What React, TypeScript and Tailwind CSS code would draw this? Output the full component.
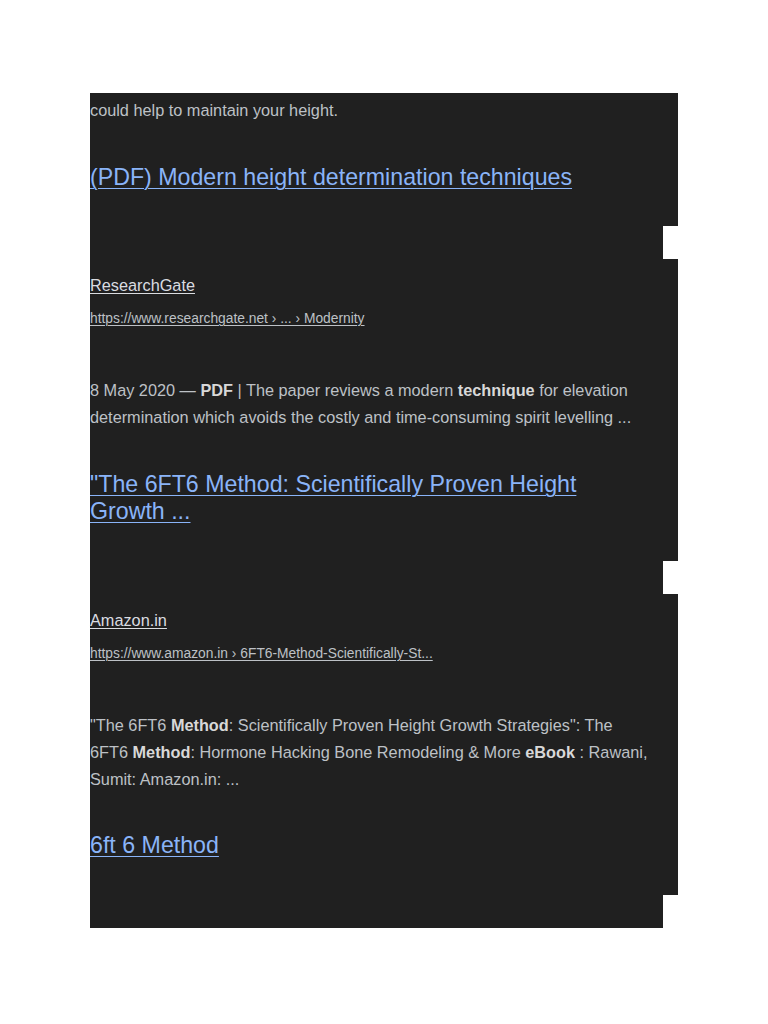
import React from "react";

const font = { fontFamily: '"Liberation Sans", Arial, sans-serif' };

function Wide({ children, className = "" }: { children: React.ReactNode; className?: string }) {
  return <div className={`w-[588px] pr-[28px] bg-[#202020] ${className}`}>{children}</div>;
}

function Strip() {
  return <div className="w-[573px] h-[33px] bg-[#202020]" />;
}

function Title({ children, className = "mt-[40px]" }: { children: React.ReactNode; className?: string }) {
  return (
    <div
      className={`${className} text-[23.2px] leading-[27px] text-[#8ab4f8] underline decoration-1 underline-offset-[3px]`}
    >
      {children}
    </div>
  );
}

function Site({ name, url }: { name: string; url: string }) {
  return (
    <>
      <div className="pt-[14px] text-[16.3px] leading-[24px] text-[#dadce0] underline decoration-1 underline-offset-2">
        {name}
      </div>
      <div className="mt-[12px] text-[13.8px] leading-[20px] text-[#bdc1c6] underline decoration-1 underline-offset-2">
        {url}
      </div>
    </>
  );
}

function Snippet({ children }: { children: React.ReactNode }) {
  return <div className="mt-[48px] text-[16.3px] leading-[27px] text-[#bdc1c6]">{children}</div>;
}

const B = ({ children }: { children: React.ReactNode }) => (
  <b className="font-bold text-[#d8d8d8]">{children}</b>
);

export default function App() {
  return (
    <div className="min-h-[1024px] bg-white pt-[93px] pl-[90px]" style={font}>
      <Wide className="pb-[35px]">
        <div className="pt-[4px] text-[16.3px] leading-[27px] text-[#bdc1c6]">could help to maintain your height.</div>
        <Title>(PDF) Modern height determination techniques</Title>
      </Wide>
      <Strip />
      <Wide className="pb-[36px]">
        <Site name="ResearchGate" url="https://www.researchgate.net › ... › Modernity" />
        <Snippet>
          8 May 2020 — <B>PDF</B> | The paper reviews a modern <B>technique</B> for elevation determination which
          avoids the costly and time-consuming spirit levelling ...
        </Snippet>
        <Title>"The 6FT6 Method: Scientifically Proven Height Growth ...</Title>
      </Wide>
      <Strip />
      <Wide className="pb-[36px]">
        <Site name="Amazon.in" url="https://www.amazon.in › 6FT6-Method-Scientifically-St..." />
        <Snippet>
          "The 6FT6 <B>Method</B>: Scientifically Proven Height Growth Strategies": The 6FT6 <B>Method</B>: Hormone
          Hacking Bone Remodeling &amp; More <B>eBook</B> : Rawani, Sumit: Amazon.in: ...
        </Snippet>
        <Title className="mt-[39px]">6ft 6 Method</Title>
      </Wide>
      <Strip />
    </div>
  );
}
